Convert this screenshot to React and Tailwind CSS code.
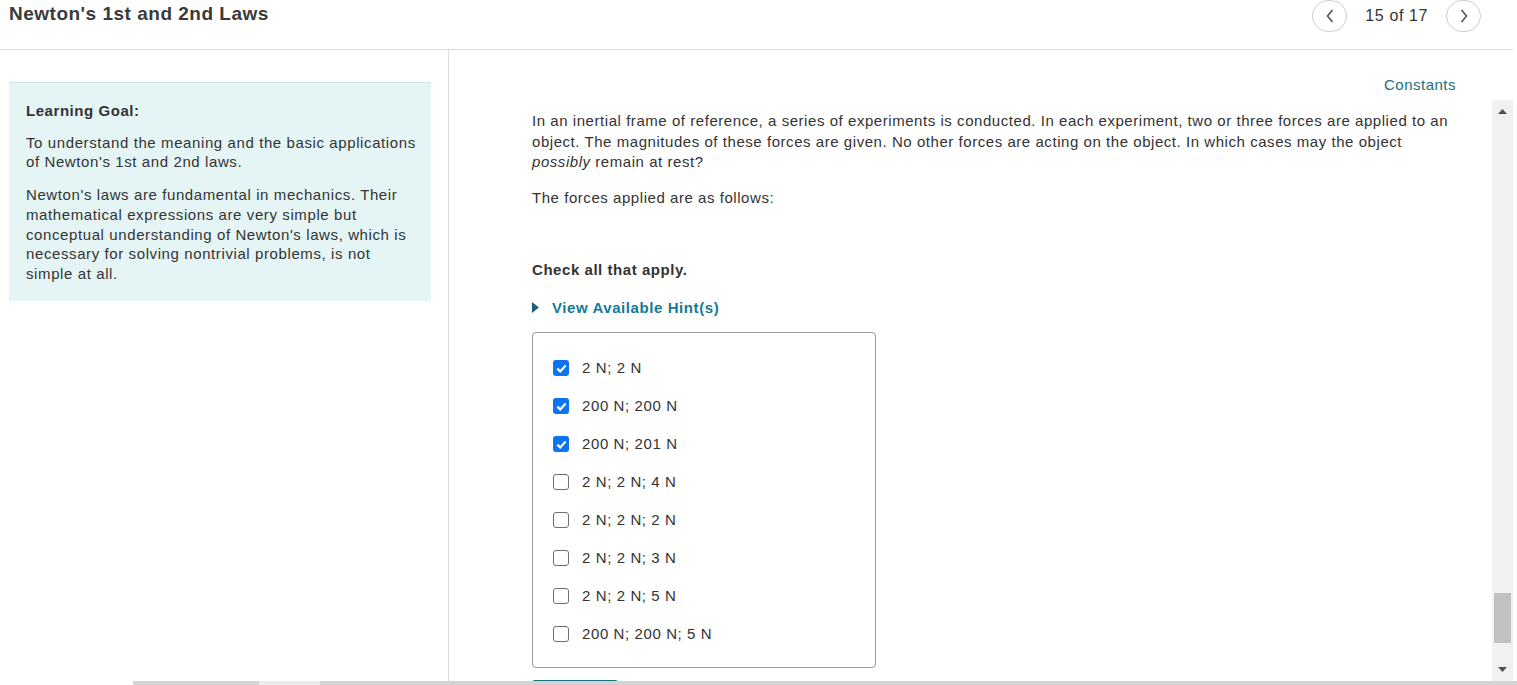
const options = [
  { label: "2 N; 2 N", checked: true },
  { label: "200 N; 200 N", checked: true },
  { label: "200 N; 201 N", checked: true },
  { label: "2 N; 2 N; 4 N", checked: false },
  { label: "2 N; 2 N; 2 N", checked: false },
  { label: "2 N; 2 N; 3 N", checked: false },
  { label: "2 N; 2 N; 5 N", checked: false },
  { label: "200 N; 200 N; 5 N", checked: false },
];

const Chevron = ({ dir }) => (
  <svg width="10" height="16" viewBox="0 0 10 16" fill="none" stroke="#555" strokeWidth="1.6">
    {dir === "left" ? <path d="M7.5 2 L2.5 8 L7.5 14" /> : <path d="M2.5 2 L7.5 8 L2.5 14" />}
  </svg>
);

const Checkbox = ({ checked }) =>
  checked ? (
    <span className="w-[16px] h-[16px] rounded-[3px] bg-[#0b74f0] flex items-center justify-center shrink-0">
      <svg width="11" height="9" viewBox="0 0 11 9" fill="none" stroke="white" strokeWidth="2.2">
        <path d="M1.3 4.6 L4.2 7.4 L9.7 1.5" />
      </svg>
    </span>
  ) : (
    <span className="w-[16px] h-[16px] rounded-[3px] border border-[#6f6f6f] bg-white shrink-0" />
  );

const App = () => {
  return (
    <div className="w-[1517px] h-[685px] overflow-hidden flex flex-col bg-white text-[#333] font-['Liberation_Sans',Arial,sans-serif]">
      {/* header */}
      <div className="h-[50px] w-[1513px] flex items-start justify-between border-b border-[#dcdcdc] shrink-0">
        <div className="pl-[9px] pt-[2px] text-[19px] leading-[24px] font-bold tracking-[0.5px] text-[#3a3a3a]">
          Newton's 1st and 2nd Laws
        </div>
        <div className="flex items-center pr-[32px]">
          <button className="w-[35px] h-[32px] rounded-full border border-[#cfcfcf] flex items-center justify-center">
            <Chevron dir="left" />
          </button>
          <span className="mx-[18px] text-[16px] leading-[30px] tracking-[0.6px] text-[#333]">15 of 17</span>
          <button className="w-[35px] h-[32px] rounded-full border border-[#cfcfcf] flex items-center justify-center">
            <Chevron dir="right" />
          </button>
        </div>
      </div>

      {/* body */}
      <div className="flex flex-1 min-h-0">
        <div className="w-[449px] shrink-0 border-r border-[#dcdcdc] pt-[32px]">
          <div className="ml-[9px] w-[422px] bg-[#e5f5f6] border-t border-[#d3e3e4] pl-[17px] pr-[10px] pt-[18px] pb-[17px] text-[15px] leading-[19.7px] tracking-[0.6px]">
            <p className="font-bold tracking-[0.55px]">Learning Goal:</p>
            <p className="mt-[12px]">
              To understand the meaning and the basic applications of Newton's 1st and 2nd laws.
            </p>
            <p className="mt-[13px]">
              Newton's laws are fundamental in mechanics. Their mathematical expressions are very simple but
              conceptual understanding of Newton's laws, which is necessary for solving nontrivial problems, is not
              simple at all.
            </p>
          </div>
        </div>

        <div className="flex-1 flex flex-col min-w-0">
          <div className="h-[50px] shrink-0 flex justify-end items-start pt-[25px] pr-[61px]">
            <span className="text-[15px] leading-[20px] tracking-[0.5px] text-[#1d6e80]">Constants</span>
          </div>
          <div className="flex flex-1 min-h-0 w-[1064px]">
            <div className="flex-1 overflow-hidden pl-[83px] pr-[40px] pt-[11px] text-[15px] leading-[20.5px] tracking-[0.55px]">
              <p>
                In an inertial frame of reference, a series of experiments is conducted. In each experiment, two or
                three forces are applied to an object. The magnitudes of these forces are given. No other forces are
                acting on the object. In which cases may the object <i>possibly</i> remain at rest?
              </p>
              <p className="mt-[15px]">The forces applied are as follows:</p>
              <p className="mt-[52px] font-bold tracking-[0.55px]">Check all that apply.</p>
              <div className="mt-[17px] flex items-center gap-[13px] text-[#167a96] font-bold tracking-[0.58px]">
                <svg width="7" height="11" viewBox="0 0 7 11">
                  <path d="M0 0 L7 5.5 L0 11 Z" fill="#1d5e78" />
                </svg>
                <span>View Available Hint(s)</span>
              </div>
              <div className="mt-[14px] w-[344px] border border-[#9c9c9c] rounded-[4px] pt-[16px] pb-[14px] pl-[20px] tracking-[0.6px]">
                {options.map((o) => (
                  <div key={o.label} className="h-[38px] flex items-center gap-[13px]">
                    <Checkbox checked={o.checked} />
                    <span>{o.label}</span>
                  </div>
                ))}
              </div>
              <div className="mt-[12px] w-[86px] h-[20px] bg-[#1d6e80] rounded-t-[3px]" />
            </div>
            <div className="w-[21px] shrink-0 bg-[#f1f1f1] flex flex-col items-center pt-[9px] pb-[9px]">
              <svg width="9" height="5" viewBox="0 0 9 5">
                <path d="M0 5 L4.5 0 L9 5 Z" fill="#505050" />
              </svg>
              <div className="flex-1" />
              <div className="w-[17px] h-[50px] bg-[#c1c1c1]" />
              <div className="h-[24px]" />
              <svg width="9" height="5" viewBox="0 0 9 5">
                <path d="M0 0 L4.5 5 L9 0 Z" fill="#505050" />
              </svg>
            </div>
          </div>
        </div>
      </div>

      {/* bottom scrollbar */}
      <div className="h-[4px] shrink-0 flex">
        <div className="w-[133px] bg-white" />
        <div className="w-[126px] bg-[#d3d3d3]" />
        <div className="w-[61px] bg-[#ececec]" />
        <div className="flex-1 bg-[#d3d3d3]" />
      </div>
    </div>
  );
};

export default App;
